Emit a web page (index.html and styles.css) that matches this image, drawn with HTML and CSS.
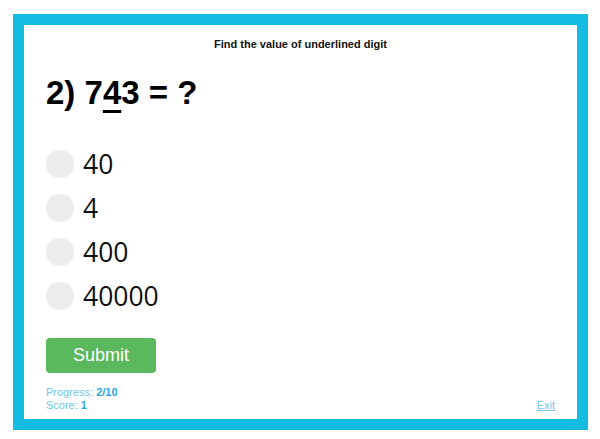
FILE: index.html
```html
<!DOCTYPE html>
<html>
<head>
<meta charset="utf-8">
<link rel="stylesheet" href="styles.css">
</head>
<body>
<div class="frame">
  <div class="card">
    <div class="title">Find the value of underlined digit</div>
    <div class="question">2) 7<span class="u">4</span>3 = ?</div>
    <div class="options">
      <label class="option"><span class="radio"></span><span class="opt-text">40</span></label>
      <label class="option"><span class="radio"></span><span class="opt-text">4</span></label>
      <label class="option"><span class="radio"></span><span class="opt-text">400</span></label>
      <label class="option"><span class="radio"></span><span class="opt-text">40000</span></label>
    </div>
    <button class="submit">Submit</button>
    <div class="footer">
      <div class="stats">
        <div>Progress: <b>2/10</b></div>
        <div>Score: <b>1</b></div>
      </div>
      <a class="exit" href="#">Exit</a>
    </div>
  </div>
</div>
</body>
</html>
```
FILE: styles.css
```css
html, body {
  margin: 0;
  padding: 0;
  background: #fff;
}
.frame {
  margin: 14px 0 0 13px;
  width: 575px;
  height: 416px;
  box-sizing: border-box;
  border: 11px solid #14bce2;
  background: #fff;
}
.card {
  height: 100%;
  box-sizing: border-box;
  padding: 12px 22px 0 22px;
  display: flex;
  flex-direction: column;
  font-family: "Liberation Sans", Arial, sans-serif;
}
.title {
  text-align: center;
  font-size: 11px;
  font-weight: bold;
  line-height: 14px;
  color: #111;
}
.question {
  margin-top: 23px;
  font-size: 33px;
  font-weight: bold;
  line-height: 37px;
  color: #000;
}
.u {
  text-decoration: underline;
  text-decoration-thickness: 3px;
  text-underline-offset: 6px;
}
.options {
  margin-top: 39px;
  display: flex;
  flex-direction: column;
  gap: 16px;
}
.option {
  display: flex;
  align-items: center;
  height: 28px;
}
.radio {
  width: 28px;
  height: 28px;
  border-radius: 50%;
  background: #ececec;
  flex: none;
}
.opt-text {
  margin-left: 9px;
  font-family: "Open Sans", "Noto Sans", sans-serif;
  font-size: 26.5px;
  line-height: 28px;
  color: #111;
}
.submit {
  margin-top: 28px;
  width: 110px;
  height: 35px;
  border: none;
  border-radius: 4px;
  background: #5cb85c;
  color: #fff;
  font-family: "Liberation Sans", Arial, sans-serif;
  font-size: 18px;
  padding: 0;
}
.footer {
  margin-top: 13px;
  display: flex;
  justify-content: space-between;
  align-items: flex-end;
}
.stats {
  font-size: 11px;
  line-height: 13px;
  color: #72c4e6;
}
.stats b {
  color: #2aa9de;
}
.exit {
  font-size: 11px;
  line-height: 13px;
  color: #72c4e6;
  text-decoration: underline;
}
```
